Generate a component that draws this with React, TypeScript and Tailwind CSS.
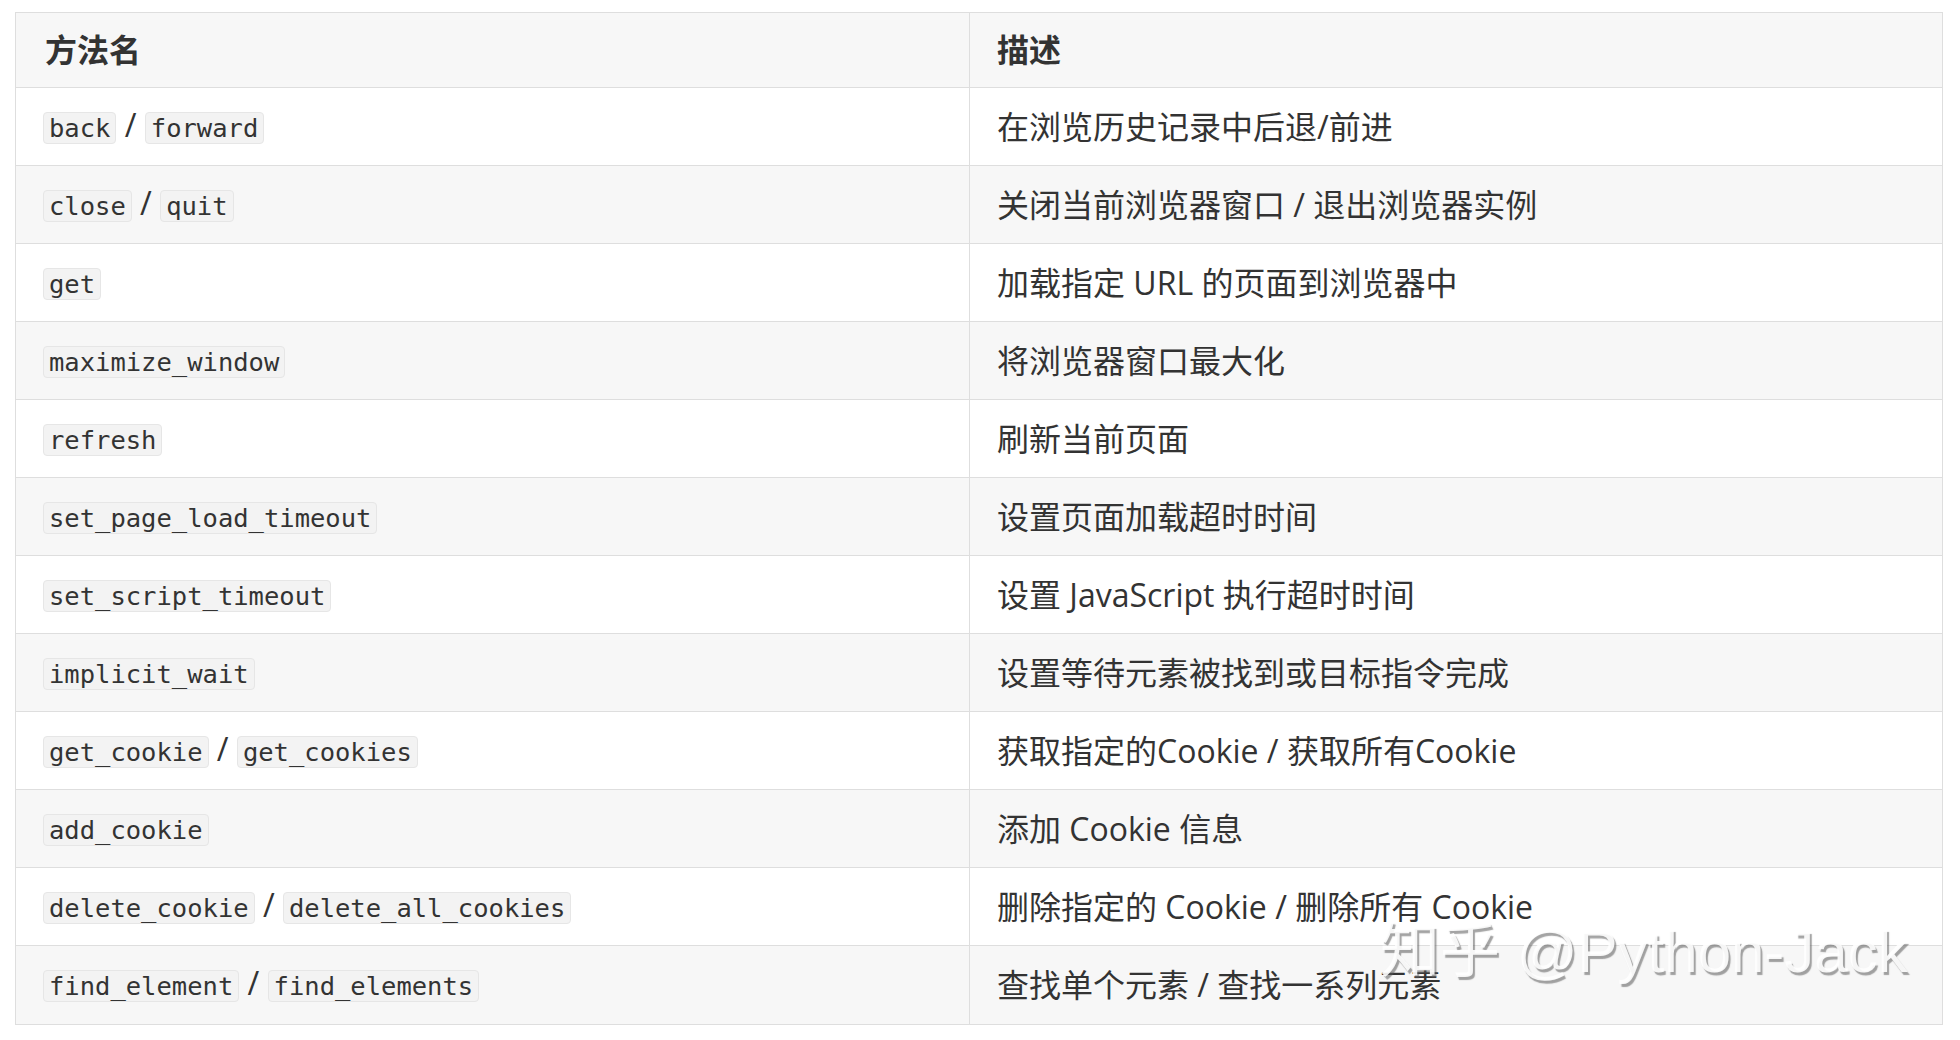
import React from "react";

type Row = { codes: string[]; desc: string };

const rows: Row[] = [
  { codes: ["back", "forward"], desc: "在浏览历史记录中后退/前进" },
  { codes: ["close", "quit"], desc: "关闭当前浏览器窗口 / 退出浏览器实例" },
  { codes: ["get"], desc: "加载指定 URL 的页面到浏览器中" },
  { codes: ["maximize_window"], desc: "将浏览器窗口最大化" },
  { codes: ["refresh"], desc: "刷新当前页面" },
  { codes: ["set_page_load_timeout"], desc: "设置页面加载超时时间" },
  { codes: ["set_script_timeout"], desc: "设置 JavaScript 执行超时时间" },
  { codes: ["implicit_wait"], desc: "设置等待元素被找到或目标指令完成" },
  { codes: ["get_cookie", "get_cookies"], desc: "获取指定的Cookie / 获取所有Cookie" },
  { codes: ["add_cookie"], desc: "添加 Cookie 信息" },
  { codes: ["delete_cookie", "delete_all_cookies"], desc: "删除指定的 Cookie / 删除所有 Cookie" },
  { codes: ["find_element", "find_elements"], desc: "查找单个元素 / 查找一系列元素" },
];

const sans = "font-['Open_Sans','Noto_Sans_CJK_SC',sans-serif]";

function Code({ children }: { children: string }) {
  return (
    <span className="inline-block rounded-[4px] border border-[#e6e6e6] bg-[#f3f3f3] px-[5px] font-['DejaVu_Sans_Mono',monospace] text-[25.5px] leading-[30px] text-[#333]">
      {children}
    </span>
  );
}

export default function App() {
  return (
    <div className={`relative h-[1040px] w-[1960px] overflow-hidden bg-white pl-[15px] pt-[12px] ${sans} text-[#333]`}>
      <div className="w-[1928px] border border-[#dedede]">
        <div className="grid h-[75px] grid-cols-[954px_1fr] border-b border-[#dedede] bg-[#f7f7f7]">
          <div className="flex items-center border-r border-[#dedede] pl-[29px] text-[32px] font-bold">方法名</div>
          <div className="flex items-center pl-[27px] text-[32px] font-bold">描述</div>
        </div>
        {rows.map((r, i) => (
          <div
            key={i}
            className={`grid h-[78px] grid-cols-[954px_1fr] ${i < rows.length - 1 ? "border-b border-[#dedede]" : ""} ${i % 2 === 1 ? "bg-[#f7f7f7]" : "bg-white"}`}
          >
            <div className="flex items-center border-r border-[#dedede] pb-[4px] pl-[27px] text-[32px]">
              <span className="whitespace-pre leading-[40px]">
                {r.codes.map((c, j) => (
                  <React.Fragment key={j}>
                    {j > 0 ? " / " : ""}
                    <Code>{c}</Code>
                  </React.Fragment>
                ))}
              </span>
            </div>
            <div className="flex items-center pl-[27px] text-[32px]">{r.desc}</div>
          </div>
        ))}
      </div>
      <div
        className="absolute left-[1380px] top-[912px] whitespace-pre font-['Liberation_Sans','Noto_Sans_CJK_SC',sans-serif] text-[60px] leading-[80px] text-white/90"
        style={{ textShadow: "2px 3px 1px rgba(90,90,90,0.55)" }}
      >
        知乎 @Python-Jack
      </div>
    </div>
  );
}
